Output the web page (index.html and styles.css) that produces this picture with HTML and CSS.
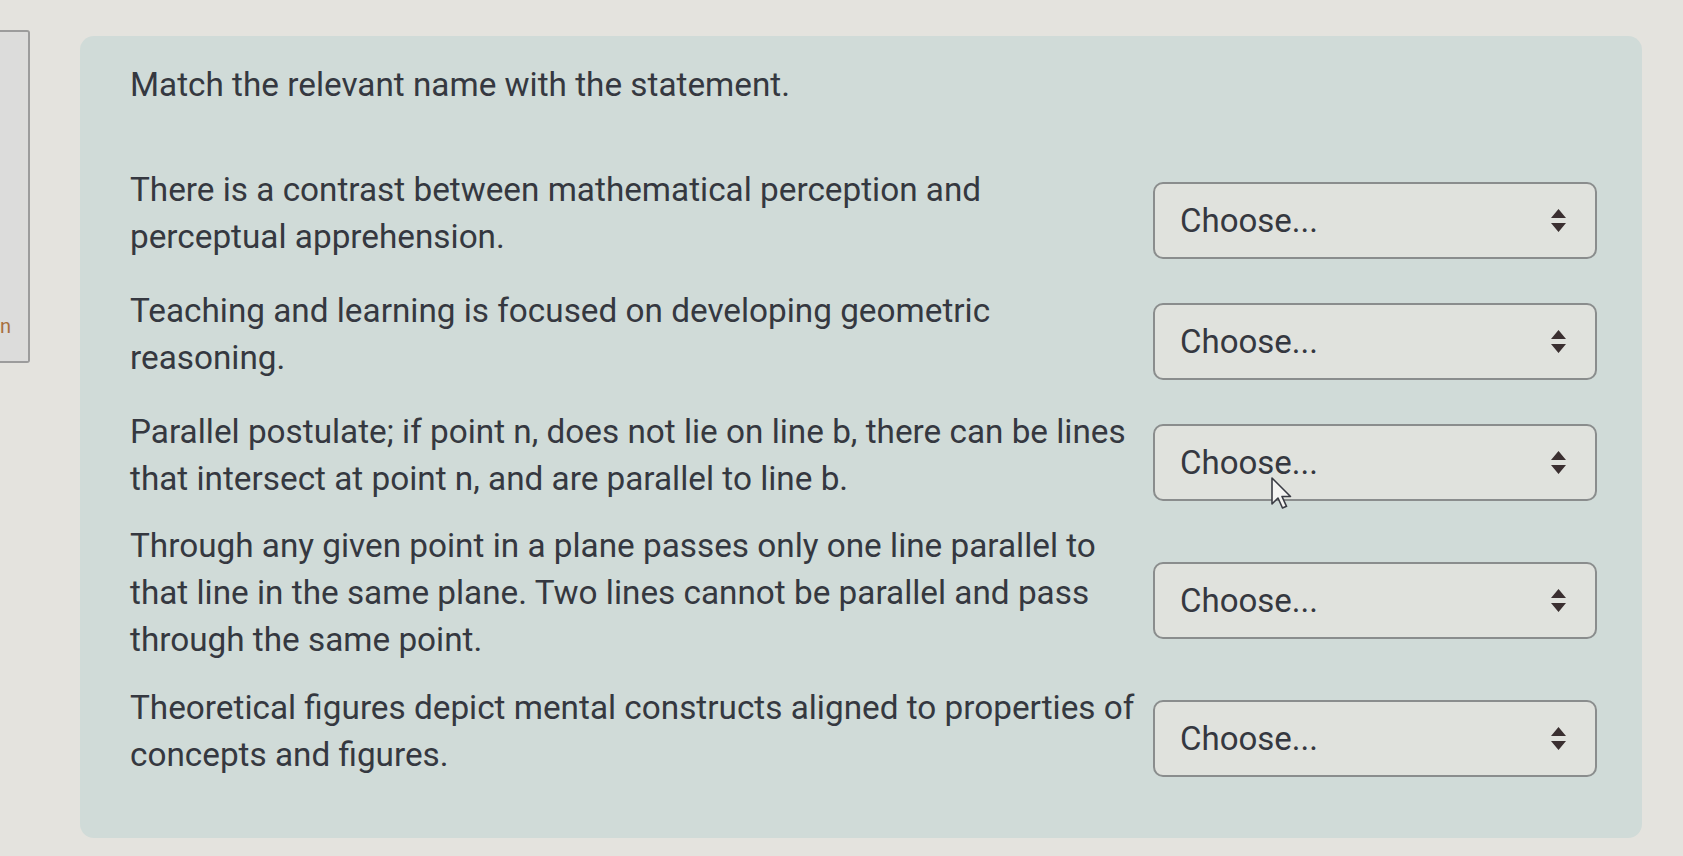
FILE: index.html
```html
<!DOCTYPE html>
<html lang="en">
<head>
<meta charset="utf-8">
<title>Match question</title>
<link rel="stylesheet" href="styles.css">
</head>
<body>
<div class="page">
  <aside class="stub"><span class="stub-mark">n</span></aside>
  <main class="panel">
    <p class="title">Match the relevant name with the statement.</p>
    <div class="rows">
      <div class="row">
        <div class="stmt">There is a contrast between mathematical perception and<br>perceptual apprehension.</div>
        <div class="ctl"><div class="select"><span>Choose...</span><svg class="arrows" width="15" height="23" viewBox="0 0 15 23"><path d="M7.5 0 L15 9 L0 9 Z M0 14 L15 14 L7.5 23 Z"/></svg></div></div>
      </div>
      <div class="row">
        <div class="stmt">Teaching and learning is focused on developing geometric<br>reasoning.</div>
        <div class="ctl"><div class="select"><span>Choose...</span><svg class="arrows" width="15" height="23" viewBox="0 0 15 23"><path d="M7.5 0 L15 9 L0 9 Z M0 14 L15 14 L7.5 23 Z"/></svg></div></div>
      </div>
      <div class="row">
        <div class="stmt">Parallel postulate; if point n, does not lie on line b, there can be lines<br>that intersect at point n, and are parallel to line b.</div>
        <div class="ctl"><div class="select"><span>Choose...</span><svg class="arrows" width="15" height="23" viewBox="0 0 15 23"><path d="M7.5 0 L15 9 L0 9 Z M0 14 L15 14 L7.5 23 Z"/></svg></div></div>
      </div>
      <div class="row">
        <div class="stmt">Through any given point in a plane passes only one line parallel to<br>that line in the same plane. Two lines cannot be parallel and pass<br>through the same point.</div>
        <div class="ctl"><div class="select"><span>Choose...</span><svg class="arrows" width="15" height="23" viewBox="0 0 15 23"><path d="M7.5 0 L15 9 L0 9 Z M0 14 L15 14 L7.5 23 Z"/></svg></div></div>
      </div>
      <div class="row">
        <div class="stmt">Theoretical figures depict mental constructs aligned to properties of<br>concepts and figures.</div>
        <div class="ctl"><div class="select"><span>Choose...</span><svg class="arrows" width="15" height="23" viewBox="0 0 15 23"><path d="M7.5 0 L15 9 L0 9 Z M0 14 L15 14 L7.5 23 Z"/></svg></div></div>
      </div>
    </div>
  </main>
</div>
<svg class="cursor" width="22" height="33" viewBox="0 0 22 33"><path d="M1 1 L1 27 L7 21 L11.5 31 L15.5 29.3 L11 19.5 L19.5 19.5 Z"/></svg>
</body>
</html>
```
FILE: styles.css
```css
html, body {
  margin: 0;
  padding: 0;
}

body {
  background: #e4e3de;
  font-family: Roboto, "Liberation Sans", Arial, sans-serif;
  color: #353840;
  position: relative;
}

.page {
  display: flex;
  align-items: flex-start;
  width: 1683px;
  height: 856px;
  overflow: hidden;
}

.stub {
  flex: none;
  width: 30px;
  height: 333px;
  margin-top: 30px;
  box-sizing: border-box;
  border: 2px solid #9c9c9c;
  border-left: none;
  border-radius: 0 3px 3px 0;
  background: #dcdcdb;
  overflow: hidden;
  display: flex;
  flex-direction: column;
  justify-content: flex-end;
  padding-bottom: 24px;
}

.stub-mark {
  display: block;
  margin-left: 0;
  font-size: 20px;
  line-height: 22px;
  color: #a8703f;
}

.panel {
  flex: none;
  margin-left: 50px;
  margin-top: 36px;
  width: 1562px;
  height: 802px;
  box-sizing: border-box;
  background: #d0dbd8;
  border-radius: 14px;
  padding: 25px 45px 0 50px;
}

.title {
  margin: 0;
  font-size: 33.3px;
  line-height: 47px;
}

.rows {
  margin-top: 44px;
}

.row {
  display: grid;
  grid-template-columns: 1fr 444px;
  align-items: center;
}

.stmt {
  padding: 7px 0;
  font-size: 33.3px;
  line-height: 47px;
  white-space: nowrap;
}

.ctl {
  padding: 30px 0 14px;
}

.select {
  height: 77px;
  box-sizing: border-box;
  border: 2px solid #8a8d8d;
  border-radius: 10px;
  background: #e0e2dd;
  display: flex;
  align-items: center;
  justify-content: space-between;
  padding: 0 29px 0 25px;
  font-size: 33px;
  color: #353840;
}

.arrows {
  display: block;
  fill: #3a2f30;
}

.cursor {
  position: absolute;
  left: 1271px;
  top: 477px;
  fill: #f4f4f2;
  stroke: #3a3c44;
  stroke-width: 1.6;
  stroke-linejoin: round;
}
```
